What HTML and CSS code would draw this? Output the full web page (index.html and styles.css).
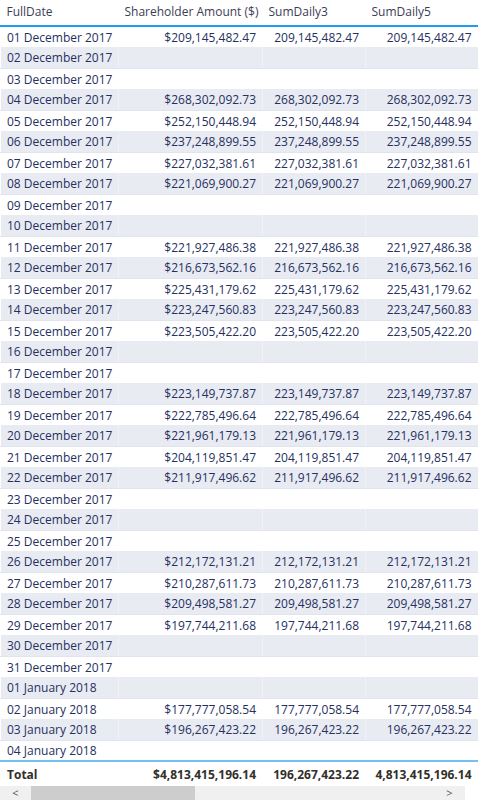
FILE: index.html
```html
<!DOCTYPE html>
<html lang="en">
<head>
  <meta charset="UTF-8">
  <meta name="viewport" content="width=device-width, initial-scale=1">
  <title>Shareholder Amount</title>
  <link rel="stylesheet" href="styles.css">
</head>
<body>

  <div class="visual">
    <table class="grid">
      <colgroup>
        <col class="c-date">
        <col class="c-amount">
        <col class="c-sum3">
        <col class="c-sum5">
      </colgroup>
      <thead>
        <tr>
          <th>FullDate</th>
          <th>Shareholder Amount ($)</th>
          <th>SumDaily3</th>
          <th>SumDaily5</th>
        </tr>
      </thead>
      <tbody>
        <tr><td>01 December 2017</td><td>$209,145,482.47</td><td>209,145,482.47</td><td>209,145,482.47</td></tr>
        <tr><td>02 December 2017</td><td></td><td></td><td></td></tr>
        <tr><td>03 December 2017</td><td></td><td></td><td></td></tr>
        <tr><td>04 December 2017</td><td>$268,302,092.73</td><td>268,302,092.73</td><td>268,302,092.73</td></tr>
        <tr><td>05 December 2017</td><td>$252,150,448.94</td><td>252,150,448.94</td><td>252,150,448.94</td></tr>
        <tr><td>06 December 2017</td><td>$237,248,899.55</td><td>237,248,899.55</td><td>237,248,899.55</td></tr>
        <tr><td>07 December 2017</td><td>$227,032,381.61</td><td>227,032,381.61</td><td>227,032,381.61</td></tr>
        <tr><td>08 December 2017</td><td>$221,069,900.27</td><td>221,069,900.27</td><td>221,069,900.27</td></tr>
        <tr><td>09 December 2017</td><td></td><td></td><td></td></tr>
        <tr><td>10 December 2017</td><td></td><td></td><td></td></tr>
        <tr><td>11 December 2017</td><td>$221,927,486.38</td><td>221,927,486.38</td><td>221,927,486.38</td></tr>
        <tr><td>12 December 2017</td><td>$216,673,562.16</td><td>216,673,562.16</td><td>216,673,562.16</td></tr>
        <tr><td>13 December 2017</td><td>$225,431,179.62</td><td>225,431,179.62</td><td>225,431,179.62</td></tr>
        <tr><td>14 December 2017</td><td>$223,247,560.83</td><td>223,247,560.83</td><td>223,247,560.83</td></tr>
        <tr><td>15 December 2017</td><td>$223,505,422.20</td><td>223,505,422.20</td><td>223,505,422.20</td></tr>
        <tr><td>16 December 2017</td><td></td><td></td><td></td></tr>
        <tr><td>17 December 2017</td><td></td><td></td><td></td></tr>
        <tr><td>18 December 2017</td><td>$223,149,737.87</td><td>223,149,737.87</td><td>223,149,737.87</td></tr>
        <tr><td>19 December 2017</td><td>$222,785,496.64</td><td>222,785,496.64</td><td>222,785,496.64</td></tr>
        <tr><td>20 December 2017</td><td>$221,961,179.13</td><td>221,961,179.13</td><td>221,961,179.13</td></tr>
        <tr><td>21 December 2017</td><td>$204,119,851.47</td><td>204,119,851.47</td><td>204,119,851.47</td></tr>
        <tr><td>22 December 2017</td><td>$211,917,496.62</td><td>211,917,496.62</td><td>211,917,496.62</td></tr>
        <tr><td>23 December 2017</td><td></td><td></td><td></td></tr>
        <tr><td>24 December 2017</td><td></td><td></td><td></td></tr>
        <tr><td>25 December 2017</td><td></td><td></td><td></td></tr>
        <tr><td>26 December 2017</td><td>$212,172,131.21</td><td>212,172,131.21</td><td>212,172,131.21</td></tr>
        <tr><td>27 December 2017</td><td>$210,287,611.73</td><td>210,287,611.73</td><td>210,287,611.73</td></tr>
        <tr><td>28 December 2017</td><td>$209,498,581.27</td><td>209,498,581.27</td><td>209,498,581.27</td></tr>
        <tr><td>29 December 2017</td><td>$197,744,211.68</td><td>197,744,211.68</td><td>197,744,211.68</td></tr>
        <tr><td>30 December 2017</td><td></td><td></td><td></td></tr>
        <tr><td>31 December 2017</td><td></td><td></td><td></td></tr>
        <tr><td>01 January 2018</td><td></td><td></td><td></td></tr>
        <tr><td>02 January 2018</td><td>$177,777,058.54</td><td>177,777,058.54</td><td>177,777,058.54</td></tr>
        <tr><td>03 January 2018</td><td>$196,267,423.22</td><td>196,267,423.22</td><td>196,267,423.22</td></tr>
        <tr><td>04 January 2018</td><td></td><td></td><td></td></tr>
      </tbody>
      <tfoot>
        <tr><td>Total</td><td>$4,813,415,196.14</td><td>196,267,423.22</td><td>4,813,415,196.14</td></tr>
      </tfoot>
    </table>

    <!-- horizontal scrollbar -->
    <div class="hscroll">
      <span class="arrow">&lt;</span>
      <span class="thumb"></span>
      <span class="track"></span>
      <span class="arrow">&gt;</span>
    </div>
  </div>

</body>
</html>
```

FILE: styles.css
```css
* { margin:0; padding:0; box-sizing:border-box; }
body { font-family: "Open Sans", "Noto Sans", sans-serif; background:#fff; }

.visual {
  width: 477px;
}

/* — table — */
.grid {
  width: 477px;
  border-collapse: collapse;
  table-layout: fixed;
  font-size: 12px;
}
.c-date   { width: 118px; }
.c-amount { width: 144px; }
.c-sum3   { width: 103px; }
.c-sum5   { width: 112px; }

.grid th {
  height: 26px;
  text-align: left;
  font-weight: normal;
  color: #3d3d55;
  padding: 0 6px 2px;
  white-space: nowrap;
  border-bottom: 2px solid #1f9df2;
}
.grid td {
  height: 21px;
  padding: 1px 6px 0;
  color: #26305e;
  white-space: nowrap;
  text-align: right;
  border-left: 1px solid transparent;
}
.grid td:first-child { text-align: left; }
.grid tbody tr:nth-child(even) td {
  background: #e9ebf3;
  border-left-color: #f1f2f7;
  border-bottom: 1px solid #e1e4ee;
}
.grid tbody tr:nth-child(even) td:first-child { border-left-color: transparent; }

.grid tfoot td {
  height: 24px;
  font-weight: bold;
  color: #332f2a;
  border-top: 2px solid #72c0f4;
}

/* — scrollbar — */
.hscroll {
  display: flex;
  width: 465px;
  height: 14px;
  margin-top: 1px;
  background: #f0f0f0;
}
.hscroll .arrow {
  width: 31px;
  font-size: 11px;
  line-height: 14px;
  color: #555;
  text-align: center;
}
.hscroll .thumb {
  width: 164px;
  background: #cdcdcd;
}
.hscroll .track { flex: 1; }
```
